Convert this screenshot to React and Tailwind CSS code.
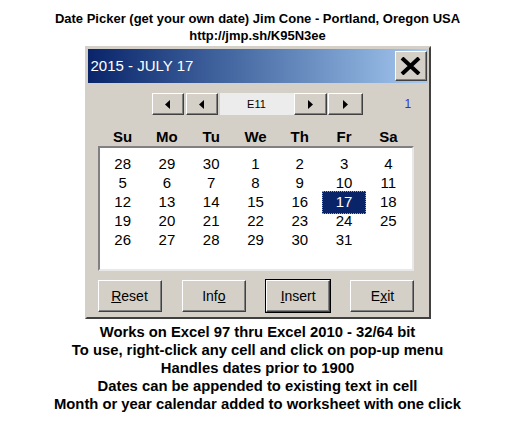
import React from "react";

const days = ["Su", "Mo", "Tu", "We", "Th", "Fr", "Sa"];

const weeks = [
  [28, 29, 30, 1, 2, 3, 4],
  [5, 6, 7, 8, 9, 10, 11],
  [12, 13, 14, 15, 16, 17, 18],
  [19, 20, 21, 22, 23, 24, 25],
  [26, 27, 28, 29, 30, 31, null],
];

const raised =
  "border border-t-white border-l-white border-r-[#404040] border-b-[#404040] shadow-[inset_-1px_-1px_#808080]";

function Arrow({ dir }) {
  return (
    <svg width="5" height="9" viewBox="0 0 5 9">
      {dir === "left" ? (
        <polygon points="5,0 5,9 0,4.5" fill="#000" />
      ) : (
        <polygon points="0,0 0,9 5,4.5" fill="#000" />
      )}
    </svg>
  );
}

function NavButton({ dir, w }) {
  return (
    <div className={`h-[22px] bg-[#d4d0c8] flex items-center justify-center ${raised} ${w}`}>
      <Arrow dir={dir} />
    </div>
  );
}

function DlgButton({ children, isDefault }) {
  return (
    <div
      className={`w-[64px] h-[32px] bg-[#d4d0c8] flex items-center justify-center text-[14px] text-black ${
        isDefault ? "outline outline-1 outline-black" : ""
      } ${raised}`}
    >
      {children}
    </div>
  );
}

export default function App() {
  return (
    <div
      className="w-[515px] h-[423px] bg-white flex flex-col items-center"
      style={{ fontFamily: '"Liberation Sans", Arial, sans-serif' }}
    >
      {/* Header text */}
      <div className="pt-[10px] text-center font-bold text-[13px] leading-[17px] text-black">
        <div>Date Picker (get your own date) Jim Cone - Portland, Oregon USA</div>
        <div>http://jmp.sh/K95N3ee</div>
      </div>

      {/* Window */}
      <div className="mt-[2px] w-[346px] bg-[#d4d0c8] border-2 border-t-[#d4d0c8] border-l-[#d4d0c8] border-r-[#404040] border-b-[#404040] p-[1px] pb-[5px]">
        <div className="h-[34px] flex items-center justify-between pl-[3px] pr-[1px] bg-gradient-to-r from-[#0a246a] to-[#a6caf0]">
          <span className="text-white text-[15px]">2015 - JULY 17</span>
          <div className={`w-[32px] h-[30px] bg-[#d4d0c8] flex items-center justify-center ${raised}`}>
            <svg width="21" height="18" viewBox="0 0 21 18">
              <path d="M2 1 L19 17 M19 1 L2 17" stroke="#000" strokeWidth="4" strokeLinecap="butt" />
            </svg>
          </div>
        </div>

        <div className="px-[10px]">
          {/* Nav row */}
          <div className="mt-[10px] h-[22px] flex items-center">
            <div className="ml-[54px] flex items-center">
              <NavButton dir="left" w="w-[32px]" />
              <div className="ml-[2px]">
                <NavButton dir="left" w="w-[32px]" />
              </div>
              <div className="ml-[2px] w-[74px] h-[22px] bg-[#ececec] flex items-center justify-center text-[11px] text-black">
                E11
              </div>
              <NavButton dir="right" w="w-[33px]" />
              <div className="ml-[1px]">
                <NavButton dir="right" w="w-[35px]" />
              </div>
            </div>
            <span className="ml-[42px] text-[12px] text-[#3030e0]">1</span>
          </div>

          {/* Day headers */}
          <div className="mt-[12px] h-[19px] w-[316px] px-[3px] grid grid-cols-7 items-center">
            {days.map((d) => (
              <div key={d} className="text-center font-bold text-[15px] text-black leading-[19px]">
                {d}
              </div>
            ))}
          </div>

          {/* Calendar box */}
          <div className="w-[316px] h-[125px] bg-white border-2 border-t-[#808080] border-l-[#808080] border-r-[#e8e8e8] border-b-[#e8e8e8] px-[1px] pt-[5px]">
            {weeks.map((week, i) => (
              <div key={i} className="grid grid-cols-7 h-[19px]">
                {week.map((n, j) =>
                  n === 17 ? (
                    <div
                      key={j}
                      className="flex items-center justify-center bg-[#0a246a] text-white text-[15px] outline outline-1 outline-dotted outline-[#c0a060] -outline-offset-1"
                    >
                      {n}
                    </div>
                  ) : (
                    <div key={j} className="flex items-center justify-center text-black text-[15px]">
                      {n}
                    </div>
                  )
                )}
              </div>
            ))}
          </div>

          {/* Buttons */}
          <div className="mt-[9px] w-[317px] flex justify-between">
            <DlgButton>
              <u>R</u>eset
            </DlgButton>
            <DlgButton>
              Inf<u>o</u>
            </DlgButton>
            <DlgButton isDefault>
              <u>I</u>nsert
            </DlgButton>
            <DlgButton>
              E<u>x</u>it
            </DlgButton>
          </div>
        </div>
      </div>

      {/* Footer text */}
      <div className="mt-[4px] text-center font-bold text-[14.8px] leading-[18px] text-black">
        <div>Works on Excel 97 thru Excel 2010 - 32/64 bit</div>
        <div>To use, right-click any cell and click on pop-up menu</div>
        <div>Handles dates prior to 1900</div>
        <div>Dates can be appended to existing text in cell</div>
        <div>Month or year calendar added to worksheet with one click</div>
      </div>
    </div>
  );
}
